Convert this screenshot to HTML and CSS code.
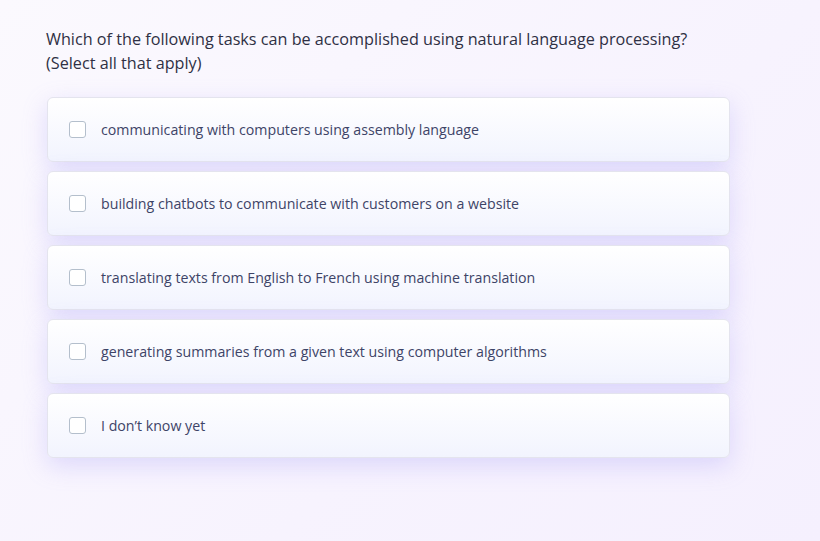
FILE: index.html
```html
<!DOCTYPE html>
<html>
<head>
<meta charset="utf-8">
<link rel="stylesheet" href="styles.css">
</head>
<body>
<main class="quiz">
  <h1 class="question">Which of the following tasks can be accomplished using natural language processing?<br>(Select all that apply)</h1>
  <ul class="options">
    <li class="option"><span class="box"></span><span class="label">communicating with computers using assembly language</span></li>
    <li class="option"><span class="box"></span><span class="label">building chatbots to communicate with customers on a website</span></li>
    <li class="option"><span class="box"></span><span class="label">translating texts from English to French using machine translation</span></li>
    <li class="option"><span class="box"></span><span class="label">generating summaries from a given text using computer algorithms</span></li>
    <li class="option"><span class="box"></span><span class="label">I don’t know yet</span></li>
  </ul>
</main>
</body>
</html>
```
FILE: styles.css
```css
html, body {
  margin: 0;
  height: 100%;
}
body {
  background: linear-gradient(135deg, #fbf9fe 0%, #f7f3fe 60%, #f5f0fe 100%);
  font-family: "Open Sans", "Liberation Sans", sans-serif;
  overflow: hidden;
}
.quiz {
  padding: 27px 0 0 46px;
  width: 684px;
}
.question {
  margin: 0;
  font-size: 16.2px;
  font-weight: 400;
  line-height: 24px;
  color: #2f3044;
}
.options {
  list-style: none;
  margin: 22px 0 0 1px;
  padding: 0;
  display: flex;
  flex-direction: column;
  gap: 9px;
}
.option {
  height: 65px;
  box-sizing: border-box;
  border: 1px solid #e4e4ee;
  border-radius: 6px;
  background: linear-gradient(180deg, #ffffff 0%, #f2f4fe 100%);
  box-shadow: 0 8px 24px rgba(160, 150, 245, 0.3);
  display: flex;
  align-items: center;
  padding-left: 21px;
}
.box {
  width: 17px;
  height: 17px;
  box-sizing: border-box;
  border: 1.5px solid #b4bfcc;
  border-radius: 3px;
  background: #fff;
  margin-right: 15px;
  flex: none;
}
.label {
  font-size: 14.2px;
  color: #3e4467;
}
```
